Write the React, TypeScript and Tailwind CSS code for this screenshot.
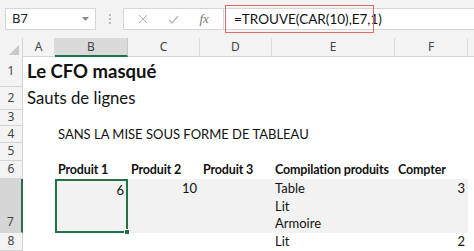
import React from "react";

const widths = [23, 32, 73, 72, 72, 123, 73];
const cols = ["A", "B", "C", "D", "E", "F"];

const body = { fontFamily: "Lato, 'Noto Sans', sans-serif" };
const ui = { fontFamily: "'Noto Sans', 'Open Sans', sans-serif" };

const Toolbar = () => (
  <div className="flex items-center h-[38px] bg-[#f3f3f3] relative">
    {/* name box */}
    <div className="ml-[5px] w-[91px] h-[22px] bg-white border border-[#d6d6d6] flex items-center justify-between pl-[6px] pr-[6px]">
      <span className="text-[13px] text-[#222]" style={ui}>
        B7
      </span>
      <svg width="7" height="5" viewBox="0 0 7 5">
        <path d="M0 0 L7 0 L3.5 4 Z" fill="#8a8a8a" />
      </svg>
    </div>
    <div className="w-[27px] flex flex-col items-center gap-[2px]">
      <span className="w-[2px] h-[2px] bg-[#b8b8b8]" />
      <span className="w-[2px] h-[2px] bg-[#b8b8b8]" />
      <span className="w-[2px] h-[2px] bg-[#b8b8b8]" />
    </div>
    {/* cancel / enter / fx */}
    <div className="w-[101px] h-[22px] bg-white border border-[#d6d6d6] flex items-center justify-around px-[4px]">
      <svg width="10" height="10" viewBox="0 0 10 10">
        <path d="M1 1 L9 9 M9 1 L1 9" stroke="#b5b5b5" strokeWidth="1" />
      </svg>
      <svg width="11" height="9" viewBox="0 0 11 9">
        <path d="M1 5 L4 8 L10 1" stroke="#b5b5b5" strokeWidth="1.2" fill="none" />
      </svg>
      <span
        className="text-[13px] italic text-[#777]"
        style={{ fontFamily: "'Liberation Serif', serif" }}
      >
        fx
      </span>
    </div>
    {/* formula */}
    <div className="flex-1 h-[22px] bg-white border-y border-[#d6d6d6] flex items-center relative">
      <div className="absolute left-[1px] top-[-4px] w-[149px] h-[28px] border-[1.5px] border-[#e06a6a]" />
      <span className="pl-[10px] text-[13.5px] text-[#111]" style={body}>
        =TROUVE(CAR(10),E7,1)
      </span>
    </div>
  </div>
);

const HeaderRow = () => (
  <div className="flex h-[19px] bg-[#f3f3f3] text-[12px] text-[#444]" style={ui}>
    <div className="w-[23px] shrink-0 border-r border-[#d4d4d4] relative">
      <svg className="absolute right-[3px] bottom-[2px]" width="10" height="10" viewBox="0 0 10 10">
        <path d="M10 0 L10 10 L0 10 Z" fill="#c8c8c8" />
      </svg>
    </div>
    {cols.map((c, i) => (
      <div
        key={c}
        className={
          c === "B"
            ? "shrink-0 flex items-center justify-center bg-[#dadada] border-r border-[#c8c8c8] border-b-2 border-b-[#217346]"
            : "shrink-0 flex items-center justify-center border-r border-[#dcdcdc] border-b border-b-[#d4d4d4]"
        }
        style={{ width: widths[i + 1] }}
      >
        {c}
      </div>
    ))}
    <div className="flex-1 border-b border-[#d4d4d4]" />
  </div>
);

type Cell = { text?: React.ReactNode; right?: boolean; bold?: boolean };

const SheetRow = ({
  n,
  h,
  cells,
  selected,
  numAlign = "center",
  children,
}: {
  n: number;
  h: number;
  cells?: Cell[];
  selected?: boolean;
  numAlign?: "center" | "end";
  children?: React.ReactNode;
}) => (
  <div className="flex text-[13px] text-[#111]" style={{ height: h, ...body }}>
    <div
      className={
        (selected
          ? "bg-[#d6d6d6] border-r-2 border-r-[#217346] "
          : "bg-[#f3f3f3] border-r border-r-[#d4d4d4] ") +
        "w-[23px] shrink-0 border-b border-b-[#d4d4d4] flex justify-center text-[12px] text-[#444] pb-[1px] " +
        (numAlign === "end" ? "items-end" : "items-center")
      }
      style={ui}
    >
      {n}
    </div>
    {children ?? (
      <>
        <div className="w-[32px] shrink-0" />
        {(cells ?? []).map((c, i) => (
          <div
            key={i}
            className={
              "shrink-0 flex items-center px-[3px] whitespace-nowrap " +
              (c.right ? "justify-end " : "") +
              (c.bold ? "font-bold text-[12.5px] tracking-[-0.15px]" : "")
            }
            style={{ width: widths[i + 2] }}
          >
            {c.text}
          </div>
        ))}
      </>
    )}
  </div>
);

export default function App() {
  return (
    <div className="w-[474px] h-[251px] overflow-hidden bg-white">
      <Toolbar />
      <HeaderRow />
      <SheetRow n={1} h={30}>
        <div className="pl-[4px] flex items-center text-[18.5px] font-bold whitespace-nowrap">Le CFO masqué</div>
      </SheetRow>
      <SheetRow n={2} h={23}>
        <div className="pl-[4px] flex items-center text-[16.7px] whitespace-nowrap">Sauts de lignes</div>
      </SheetRow>
      <SheetRow n={3} h={16}>
        <div />
      </SheetRow>
      <SheetRow n={4} h={17}>
        <div className="w-[32px] shrink-0" />
        <div className="pl-[3px] flex items-center whitespace-nowrap">SANS LA MISE SOUS FORME DE TABLEAU</div>
      </SheetRow>
      <SheetRow n={5} h={18}>
        <div />
      </SheetRow>
      <SheetRow
        n={6}
        h={18}
        cells={[
          { text: "Produit 1", bold: true },
          { text: "Produit 2", bold: true },
          { text: "Produit 3", bold: true },
          { text: "Compilation produits", bold: true },
          { text: "Compter", bold: true },
        ]}
      />
      <SheetRow n={7} h={54} selected numAlign="end">
        <div className="w-[32px] shrink-0" />
        <div className="flex bg-[#f2f2f2] w-[413px] shrink-0 leading-[17.5px]">
          <div className="relative w-[73px] shrink-0 border-2 border-[#217346] flex justify-end px-[2px] pt-[1px]">
            6
            <span className="absolute right-[-4px] bottom-[-4px] w-[6px] h-[6px] bg-[#217346] border border-white" />
          </div>
          <div className="w-[72px] shrink-0 flex justify-end px-[3px] pt-[1px]">10</div>
          <div className="w-[72px] shrink-0" />
          <div className="w-[123px] shrink-0 flex flex-col px-[3px] pt-[1px]">
            <span>Table</span>
            <span>Lit</span>
            <span>Armoire</span>
          </div>
          <div className="w-[73px] shrink-0 flex justify-end px-[3px] pt-[1px]">3</div>
        </div>
      </SheetRow>
      <SheetRow
        n={8}
        h={18}
        cells={[{}, {}, {}, { text: "Lit" }, { text: "2", right: true }]}
      />
    </div>
  );
}
